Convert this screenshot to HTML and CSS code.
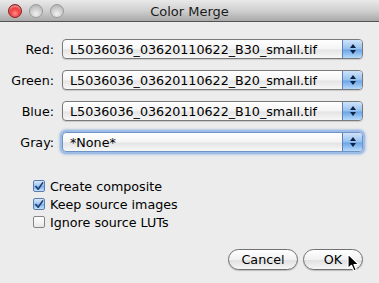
FILE: index.html
```html
<!DOCTYPE html>
<html>
<head>
<meta charset="utf-8">
<link rel="stylesheet" href="styles.css">
</head>
<body>
<div class="window">
  <div class="titlebar">
    <div class="lights">
      <span class="light red"></span>
      <span class="light gray"></span>
      <span class="light gray"></span>
    </div>
    <div class="title">Color Merge</div>
  </div>
  <div class="content">
    <div class="rows">
      <div class="row">
        <label class="lbl">Red:</label>
        <div class="select"><span class="val">L5036036_03620110622_B30_small.tif</span><span class="stepper"><i class="up"></i><i class="down"></i></span></div>
      </div>
      <div class="row">
        <label class="lbl">Green:</label>
        <div class="select"><span class="val">L5036036_03620110622_B20_small.tif</span><span class="stepper"><i class="up"></i><i class="down"></i></span></div>
      </div>
      <div class="row">
        <label class="lbl">Blue:</label>
        <div class="select"><span class="val">L5036036_03620110622_B10_small.tif</span><span class="stepper"><i class="up"></i><i class="down"></i></span></div>
      </div>
      <div class="row">
        <label class="lbl">Gray:</label>
        <div class="select focus"><span class="val">*None*</span><span class="stepper"><i class="up"></i><i class="down"></i></span></div>
      </div>
    </div>
    <div class="checks">
      <div class="check"><span class="box on"><svg width="11" height="11" viewBox="0 0 11 11"><path d="M2 5.5 L4.6 8.5 L9.5 1.5" fill="none" stroke="#1d3e74" stroke-width="1.8" stroke-linecap="round" stroke-linejoin="round"/></svg></span><span>Create composite</span></div>
      <div class="check"><span class="box on"><svg width="11" height="11" viewBox="0 0 11 11"><path d="M2 5.5 L4.6 8.5 L9.5 1.5" fill="none" stroke="#1d3e74" stroke-width="1.8" stroke-linecap="round" stroke-linejoin="round"/></svg></span><span>Keep source images</span></div>
      <div class="check"><span class="box"></span><span>Ignore source LUTs</span></div>
    </div>
    <div class="buttons">
      <button class="btn cancel">Cancel</button>
      <button class="btn ok">OK</button>
      <svg class="cursor" width="14" height="20" viewBox="0 0 14 20"><path d="M1 1 L1 15.5 L4.5 12.3 L7 18 L9.3 17 L7 11.5 L11.8 11.5 Z" fill="#000" stroke="#fff" stroke-width="1.2" stroke-linejoin="round"/></svg>
    </div>
  </div>
</div>
</body>
</html>
```

FILE: styles.css
```css
* { box-sizing: border-box; }
html, body { margin: 0; padding: 0; }
body {
  width: 379px;
  height: 283px;
  overflow: hidden;
  background: #ececec;
  font-family: "DejaVu Sans", "Liberation Sans", sans-serif;
  font-size: 12px;
  color: #000;
}
.window { width: 379px; height: 283px; display: flex; flex-direction: column; }
.titlebar {
  height: 22px;
  flex: none;
  position: relative;
  background: linear-gradient(#e9e9e9, #d0d0d0 50%, #a9a9a9);
  border-bottom: 1px solid #545454;
  display: flex;
  align-items: center;
}
.lights { display: flex; gap: 7px; padding-left: 8px; }
.light {
  width: 14px; height: 14px; border-radius: 50%;
  display: block;
}
.light.red {
  background: radial-gradient(circle at 50% 70%, #ff8f8f 0%, #f03a3a 45%, #b00f0f 100%);
  border: 1px solid #8c2020;
  box-shadow: inset 0 2px 2px rgba(255,255,255,0.5);
}
.light.gray {
  background: radial-gradient(circle at 50% 75%, #f0f0f0 0%, #cfcfcf 50%, #a8a8a8 100%);
  border: 1px solid #9a9a9a;
}
.title {
  position: absolute;
  left: 0; right: 0; top: 0; bottom: 0;
  display: flex; align-items: center; justify-content: center;
  font-size: 13px;
  color: #1a1a1a;
  padding-top: 1px;
}
.content { flex: 1; padding: 17px 0 0 0; display: flex; flex-direction: column; }
.rows { display: flex; flex-direction: column; gap: 11px; }
.row { display: flex; align-items: center; height: 20px; }
.lbl { width: 54px; text-align: right; font-size: 12.7px; padding-right: 0; }
.select {
  margin-left: 8px;
  width: 301px;
  height: 20px;
  border: 1px solid #7a7a7a;
  border-radius: 4px;
  background: linear-gradient(#ffffff, #f4f4f4 50%, #e4e4e4 55%, #f7f7f7);
  display: flex;
  align-items: center;
  overflow: hidden;
  box-shadow: 0 1px 1px rgba(0,0,0,0.15);
}
.select.focus {
  border-color: #6f93c4;
  box-shadow: 0 0 0 2px #9dbde6, 0 0 2px 3px rgba(120,160,220,0.45);
}
.val { flex: 1; padding-left: 7px; font-size: 12.7px; white-space: nowrap; }
.stepper {
  width: 20px; height: 100%;
  flex: none;
  border-left: 1px solid #5e7fb3;
  background: linear-gradient(#cfe3fa, #96c0ee 50%, #6aa5e7 55%, #b7dafa);
  display: flex; flex-direction: column; align-items: center; justify-content: center; gap: 2px;
}
.stepper i { display: block; width: 0; height: 0; border-left: 3px solid transparent; border-right: 3px solid transparent; }
.stepper .up { border-bottom: 4px solid #0e2342; }
.stepper .down { border-top: 4px solid #0e2342; }
.checks { margin-top: 28px; padding-left: 33px; display: flex; flex-direction: column; gap: 6px; }
.check { display: flex; align-items: center; gap: 5px; height: 12px; font-size: 12.7px; }
.box {
  width: 12px; height: 12px; flex: none;
  border: 1px solid #858585;
  border-radius: 2px;
  background: linear-gradient(#ffffff, #e7e7e7);
  display: flex; align-items: center; justify-content: center;
}
.box.on {
  border-color: #5d7cae;
  background: linear-gradient(#d9e9fb, #9cc3ee 50%, #80b2ea 55%, #c6e0fb);
}
.buttons {
  margin-top: auto;
  margin-bottom: 13px;
  display: flex;
  justify-content: flex-end;
  gap: 5px;
  padding-right: 16px;
  position: relative;
}
.btn {
  height: 21px;
  border: 1px solid #707070;
  border-radius: 11px;
  background: linear-gradient(#ffffff, #f1f1f1 50%, #e1e1e1 55%, #f5f5f5);
  font-family: "DejaVu Sans", "Liberation Sans", sans-serif;
  font-size: 12.7px;
  color: #000;
  padding: 0;
  box-shadow: 0 1px 1px rgba(0,0,0,0.2);
}
.cancel { width: 70px; }
.ok { width: 60px; }
.cursor { position: absolute; right: 18px; top: 4px; }
```
